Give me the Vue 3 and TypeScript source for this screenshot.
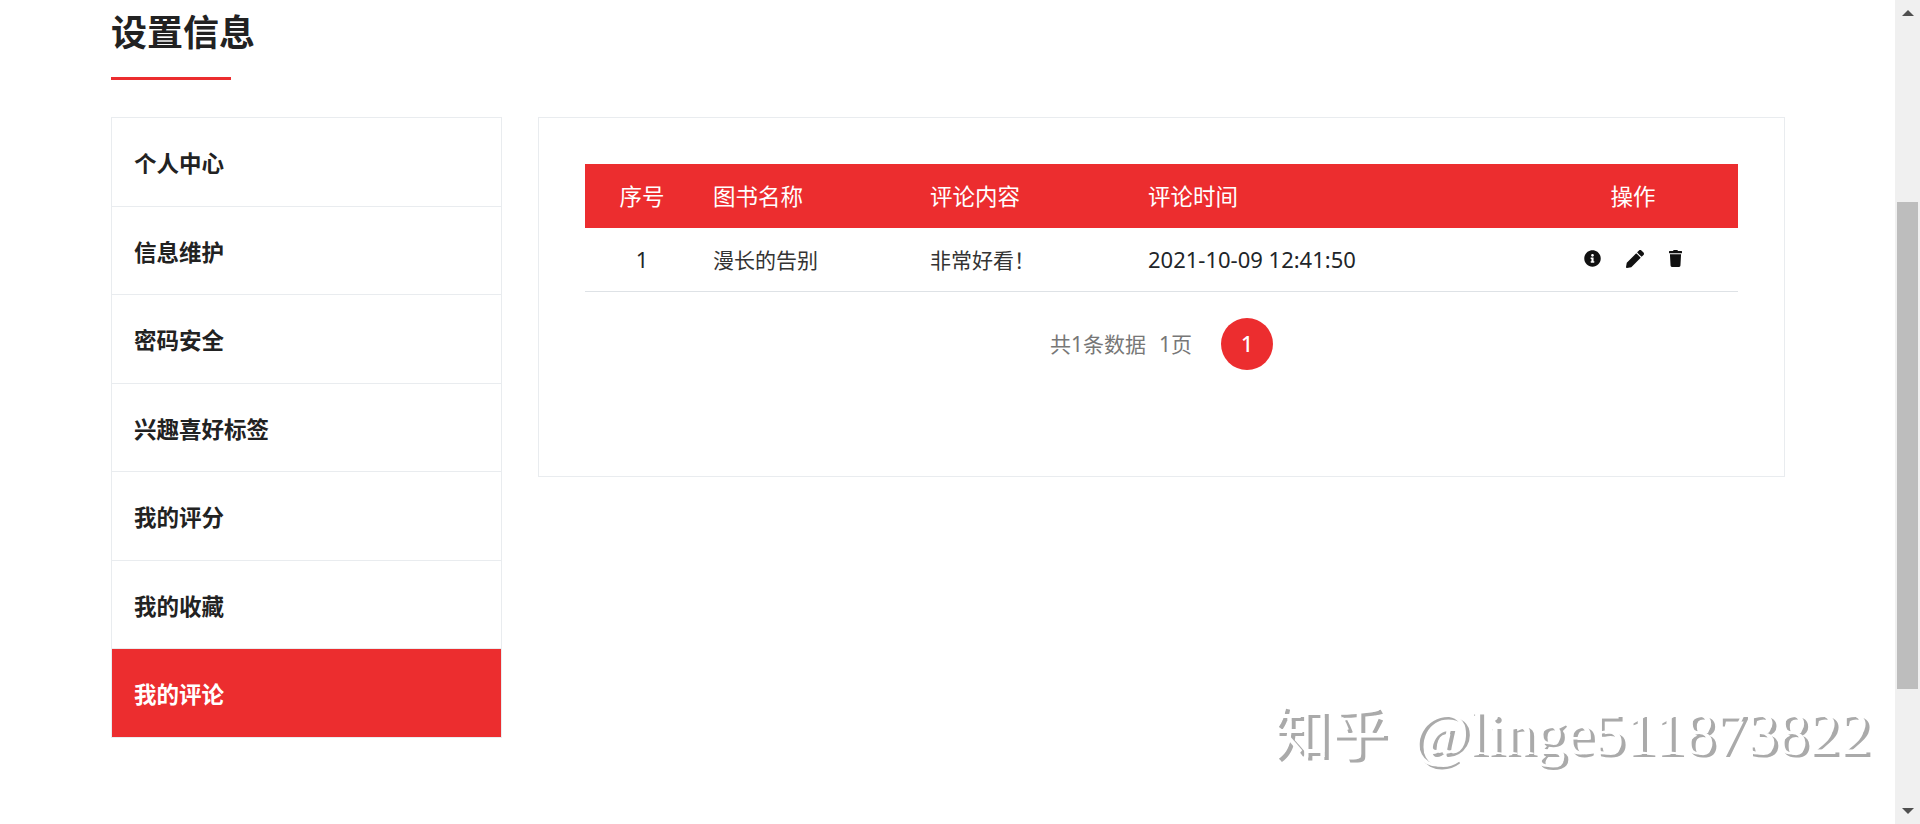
<script setup lang="ts">
const menu = ["个人中心", "信息维护", "密码安全", "兴趣喜好标签", "我的评分", "我的收藏", "我的评论"];
const activeItem = "我的评论";
</script>

<template>
  <div class="page">
    <main class="content">
      <h1 class="title">设置信息</h1>
      <div class="columns">
        <ul class="menu">
          <li v-for="item in menu" :key="item" :class="{ active: item === activeItem }">{{ item }}</li>
        </ul>
        <section class="card">
          <table>
            <colgroup>
              <col style="width: 114px" />
              <col style="width: 217px" />
              <col style="width: 218px" />
              <col style="width: 394px" />
              <col style="width: 210px" />
            </colgroup>
            <thead>
              <tr>
                <th class="center">序号</th>
                <th>图书名称</th>
                <th>评论内容</th>
                <th>评论时间</th>
                <th class="center">操作</th>
              </tr>
            </thead>
            <tbody>
              <tr>
                <td class="center num">1</td>
                <td>漫长的告别</td>
                <td>非常好看！</td>
                <td class="num">2021-10-09 12:41:50</td>
                <td class="center">
                  <div class="actions">
                    <svg class="icon" viewBox="0 0 512 512" fill="currentColor">
                      <path d="M256 8C119.043 8 8 119.083 8 256c0 136.997 111.043 248 248 248s248-111.003 248-248C504 119.083 392.957 8 256 8zm0 110c23.196 0 42 18.804 42 42s-18.804 42-42 42-42-18.804-42-42 18.804-42 42-42zm56 254c0 6.627-5.373 12-12 12h-88c-6.627 0-12-5.373-12-12v-24c0-6.627 5.373-12 12-12h12v-64h-12c-6.627 0-12-5.373-12-12v-24c0-6.627 5.373-12 12-12h64c6.627 0 12 5.373 12 12v100h12c6.627 0 12 5.373 12 12v24z" />
                    </svg>
                    <svg class="icon pencil" viewBox="0 0 512 512" fill="currentColor">
                      <path d="M497.9 142.1l-46.1 46.1c-4.7 4.7-12.3 4.7-17 0l-111-111c-4.7-4.7-4.7-12.3 0-17l46.1-46.1c18.7-18.7 49.1-18.7 67.9 0l60.1 60.1c18.8 18.7 18.8 49.1 0 67.9zM284.2 99.8L21.6 362.4.4 483.9c-2.9 16.4 11.4 30.6 27.8 27.8l121.5-21.3 262.6-262.6c4.7-4.7 4.7-12.3 0-17l-111-111c-4.8-4.7-12.4-4.7-17.1 0z" />
                    </svg>
                    <svg class="icon trash" viewBox="0 0 448 512" preserveAspectRatio="none" fill="currentColor">
                      <path d="M432 32H312l-9.4-18.7A24 24 0 0 0 281.1 0H166.8a23.72 23.72 0 0 0-21.4 13.3L136 32H16A16 16 0 0 0 0 48v32a16 16 0 0 0 16 16h416a16 16 0 0 0 16-16V48a16 16 0 0 0-16-16zM53.2 467a48 48 0 0 0 47.9 45h245.8a48 48 0 0 0 47.9-45L416 128H32z" />
                    </svg>
                  </div>
                </td>
              </tr>
            </tbody>
          </table>
          <div class="pager">
            <span>共1条数据</span>
            <span class="pages">1页</span>
            <span class="current">1</span>
          </div>
        </section>
      </div>
    </main>
    <aside class="scrollbar">
      <span class="arrow up"></span>
      <div class="track"><div class="thumb"></div></div>
      <span class="arrow down"></span>
    </aside>
    <div class="watermark"><span class="brand">知乎</span><span class="handle">@linge511873822</span></div>
  </div>
</template>

<style>
html,
body {
  margin: 0;
  background: #fff;
}
</style>

<style scoped>
.page {
  position: relative;
  display: flex;
  height: 824px;
  overflow: hidden;
  background: #fff;
  color: #212529;
  font-family: "Noto Sans", "Noto Sans CJK SC", sans-serif;
}

.content {
  flex: 1;
  padding-left: 111px;
}

.title {
  margin: 0;
  padding-top: 7px;
  height: 73px;
  font-size: 36px;
  line-height: 52px;
  font-weight: 700;
  color: #222;

  &::after {
    content: "";
    display: block;
    width: 120px;
    height: 3px;
    margin-top: 18px;
    background: #ec2d2f;
  }
}

.columns {
  display: flex;
  align-items: flex-start;
  gap: 36px;
  margin-top: 37px;
}

.menu {
  width: 391px;
  margin: 0;
  padding: 0;
  list-style: none;
  box-sizing: border-box;
  border: 1px solid #e9ecef;
  border-bottom: 0;

  & li {
    height: 88.5px;
    box-sizing: border-box;
    padding: 2px 0 0 22px;
    display: flex;
    align-items: center;
    border-bottom: 1px solid #e9ecef;
    font-size: 22.5px;
    font-weight: 700;
    color: #222;
  }

  & li.active {
    background: #ec2d2f;
    color: #fff;
  }
}

.card {
  width: 1247px;
  height: 360px;
  box-sizing: border-box;
  padding: 46px 46px 0;
  border: 1px solid #e9ecef;
}

table {
  width: 1153px;
  table-layout: fixed;
  border-collapse: collapse;
}

th,
td {
  box-sizing: border-box;
}

th {
  height: 64px;
  padding: 0 14px 1px;
  background: #ec2d2f;
  color: #fff;
  font-size: 22.5px;
  font-weight: 400;
  text-align: left;
}

td {
  height: 63px;
  padding: 0 14px 1px;
  border-bottom: 1px solid #dee2e6;
  font-size: 21px;
  color: #333;
}

td.num {
  font-size: 22px;
  color: #212529;
}

.center {
  text-align: center;
}

.actions {
  display: flex;
  align-items: center;
  justify-content: center;
  gap: 25px;
  color: #111;
}

.icon {
  width: 17px;
  height: 17px;
  display: block;
}

.pencil {
  width: 18px;
  height: 18px;
}

.trash {
  width: 13px;
  height: 17px;
}

.pager {
  display: flex;
  align-items: center;
  justify-content: center;
  margin-top: 26px;
  font-size: 21px;
  line-height: 52px;
  color: #777;
}

.pages {
  margin-left: 13px;
}

.current {
  width: 52px;
  height: 52px;
  margin-left: 29px;
  border-radius: 50%;
  background: #ec2d2f;
  color: #fff;
  font-weight: 500;
  display: flex;
  align-items: center;
  justify-content: center;
}

.scrollbar {
  width: 25px;
  background: #f0f0f0;
  display: flex;
  flex-direction: column;
  align-items: center;
  padding: 0 2px;
  box-sizing: border-box;
}

.arrow {
  flex: none;
  width: 0;
  height: 0;
  border-left: 6px solid transparent;
  border-right: 6px solid transparent;
}

.arrow.up {
  margin: 10px 0 0;
  border-bottom: 6px solid #505050;
}

.arrow.down {
  margin: 0 0 10px;
  border-top: 6px solid #505050;
}

.track {
  flex: 1;
  width: 100%;
  padding-top: 186px;
  padding-bottom: 119px;
  display: flex;
  box-sizing: border-box;
}

.thumb {
  flex: 1;
  background: #bdbdbd;
}

.watermark {
  position: absolute;
  left: 1273px;
  top: 689px;
  display: flex;
  align-items: baseline;
  gap: 25px;
  line-height: 80px;
  white-space: nowrap;
  color: #fff;
  text-shadow: 4px 3px 0 #aaa;
}

.brand {
  font-family: "Noto Sans CJK SC", sans-serif;
  font-size: 57px;
}

.handle {
  font-family: "Liberation Serif", serif;
  font-size: 62px;
}
</style>
